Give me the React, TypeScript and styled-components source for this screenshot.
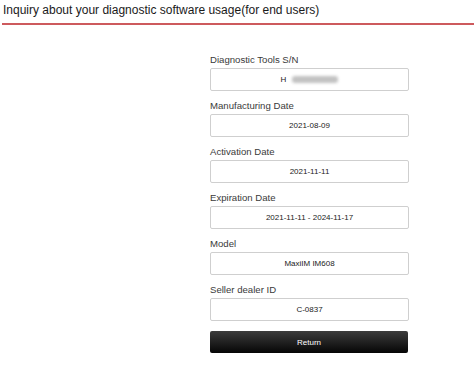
import styled, { createGlobalStyle } from 'styled-components';

type Field = {
  label: string;
  value: string;
  masked?: boolean;
};

const fields: Field[] = [
  { label: 'Diagnostic Tools S/N', value: 'H', masked: true },
  { label: 'Manufacturing Date', value: '2021-08-09' },
  { label: 'Activation Date', value: '2021-11-11' },
  { label: 'Expiration Date', value: '2021-11-11 - 2024-11-17' },
  { label: 'Model', value: 'MaxiIM IM608' },
  { label: 'Seller dealer ID', value: 'C-0837' },
];

export default function App() {
  return (
    <Page>
      <GlobalStyle />
      <Header>
        <Title>Inquiry about your diagnostic software usage(for end users)</Title>
      </Header>

      <Form>
        {fields.map((f) => (
          <Group key={f.label}>
            <Label>{f.label}</Label>
            <ValueBox>
              {f.value}
              {f.masked && <Blur />}
            </ValueBox>
          </Group>
        ))}
        <ReturnButton type='button'>Return</ReturnButton>
      </Form>
    </Page>
  );
}

const GlobalStyle = createGlobalStyle`
  body {
    margin: 0;
    padding: 0;
    background: #fff;
    font-family: "Liberation Sans", Arial, sans-serif;
  }
`;

const Page = styled.div`
  width: 474px;
  min-height: 382px;
  background: #fff;
`;

const Header = styled.div`
  margin-left: 2px;
  padding: 3px 0 6px 1px;
  border-bottom: 2px solid #cd5a5d;
`;

const Title = styled.h1`
  margin: 0;
  font-size: 12px;
  line-height: 14px;
  font-weight: 400;
  color: #1a1a1a;
`;

const Form = styled.div`
  width: 199px;
  margin: 30px 0 0 210px;
  display: flex;
  flex-direction: column;
`;

const Group = styled.div`
  display: flex;
  flex-direction: column;
  margin-bottom: 10px;
`;

const Label = styled.div`
  font-size: 9.6px;
  line-height: 10px;
  color: #3a3a3a;
  margin-bottom: 3px;
`;

const ValueBox = styled.div`
  box-sizing: border-box;
  height: 23px;
  border: 1px solid #cfcfcf;
  border-radius: 2px;
  display: flex;
  align-items: center;
  justify-content: center;
  font-size: 8px;
  color: #222;
  background: #fff;
`;

const Blur = styled.span`
  display: inline-block;
  width: 46px;
  height: 7px;
  margin-left: 6px;
  border-radius: 3px;
  background: #c2c2c2;
  filter: blur(1.5px);
`;

const ReturnButton = styled.button`
  height: 22px;
  width: 198px;
  border: none;
  border-radius: 2px;
  background: linear-gradient(#3c3c3c, #050505);
  color: #fff;
  font-family: inherit;
  font-size: 8px;
  padding: 0;
  cursor: pointer;
`;
